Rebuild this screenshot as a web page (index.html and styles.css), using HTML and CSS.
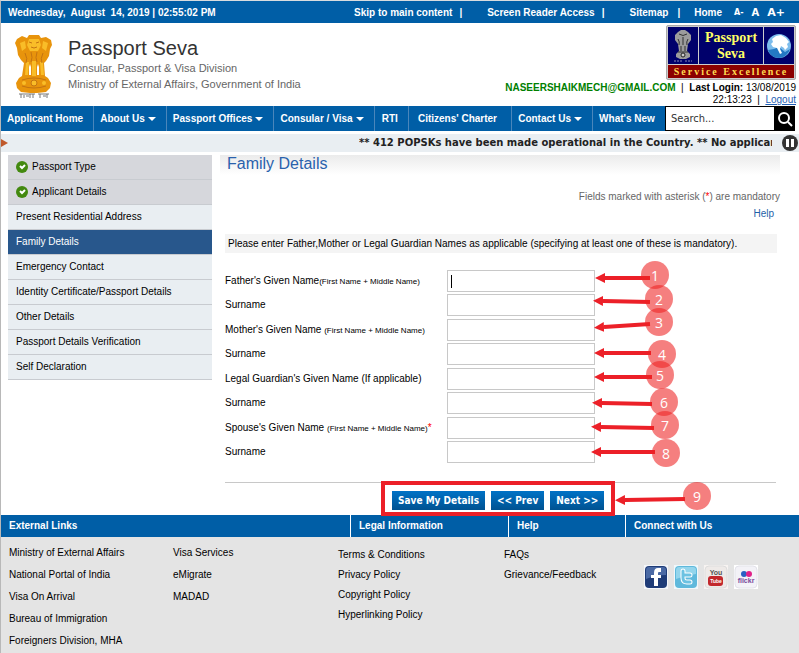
FILE: index.html
```
<!DOCTYPE html>
<html lang="en">
<head>
    <meta charset="UTF-8">
    <meta name="viewport" content="width=device-width, initial-scale=1.0">
    <title>Passport Seva - Family Details</title>
    <link rel="stylesheet" href="styles.css">
</head>
<body>
    <!-- Top Bar -->
    <div class="top-bar">
        <span class="clock">Wednesday,&nbsp; August&nbsp; 14, 2019 | 02:55:02 PM</span>
        <div class="top-links">
            <a href="#main">Skip to main content</a><span class="bar wide">|</span>
            <a href="#">Screen Reader Access</a><span class="bar wide">|</span>
            <a href="#">Sitemap</a><span class="bar">|</span>
            <a href="#">Home</a>
            <button type="button" class="font-btn small">A-</button>
            <button type="button" class="font-btn">A</button>
            <button type="button" class="font-btn large">A+</button>
        </div>
    </div>

    <!-- Header -->
    <header class="header">
        <svg class="emblem" width="42" height="66" viewBox="0 0 42 66">
            <path fill="#e8940c" d="M14 4l2-3h10l2 3 5-1 5 3 1 5-2 4-1 7-3 5-2 2 1 13 3 2 3 5-1 5-4 4-9 1H17l-9-1-4-4-1-5 3-5 3-2 2-13-3-3-3-5-1-7-2-5 2-4 5-3z"/>
            <path fill="#f9bd28" d="M16 5h10l2 6-3 6h-8l-3-6zM7 9l5-2 1 7-4 3zM35 9l-5-2-1 7 4 3zM13 28h3l-1 13h-3zM19 27h4v15h-4zM27 28h3l1 13h-3z"/>
            <path fill="none" stroke="#c47412" d="M16 8l3 1m4 0l3-1M18 13q3 2 6 0M12 19q3 6 1 10M18 18q2 6 0 10M24 18q-2 6 0 10M30 19q-3 6-1 10M9 46q12-4 24 0M9 52q12 4 24 0"/>
            <path fill="#fff" d="M16 33l1-3 1 3v8h-2zM24 33l1-3 1 3v8h-2z"/>
            <circle cx="21" cy="49" r="3" fill="#f9bd28" stroke="#c47412"/>
            <circle cx="11" cy="49" r="2" fill="#f9bd28"/>
            <circle cx="31" cy="49" r="2" fill="#f9bd28"/>
            <path fill="none" stroke="#777" d="M6 60h16M25 60h11M8 60v4M11 61v3M13 62h3M17 60v4M20 60v4M27 60v4M30 62h3M34 60v4"/>
        </svg>
        <div class="brand">
            <div class="brand-name">Passport Seva</div>
            <div class="brand-line">Consular, Passport &amp; Visa Division</div>
            <div class="brand-line">Ministry of External Affairs, Government of India</div>
        </div>
        <div class="account">
            <div class="seva-logo">
                <div class="seva-top">
                    <div class="seva-cell">
                        <svg width="22" height="34" viewBox="0 0 22 34">
                            <path fill="#9c9c9c" d="M6 3l3-2h4l3 2 3 3v5l-3 4-1 7 3 3v3l-4 2H8l-4-2v-3l3-3-1-7-3-4V6z"/>
                            <path fill="none" stroke="#333" d="M7 5q4 3 8 0M6 10q2 3 1 6M11 8v8M16 10q-2 3-1 6M9 17v5M13 17v5M6 23h10"/>
                            <circle cx="11" cy="26" r="2" fill="#ccc" stroke="#222"/>
                            <path stroke="#88b" d="M2 32h9M13 32h7" stroke-dasharray="2 1"/>
                        </svg>
                    </div>
                    <div class="seva-name">Passport<br>Seva</div>
                    <div class="seva-cell">
                        <svg width="26" height="32" viewBox="0 0 26 32">
                            <circle cx="13" cy="16" r="12" fill="#7cbcec"/>
                            <path fill="#2479c4" d="M13 28A12 12 0 0 1 2 20l6-1 5-2 6 5 5-3a12 12 0 0 1-11 9z"/>
                            <path fill="#fff" d="M6 9l4-3 5-1 5 3 3 4-2 2 1 3-3 3-1-2-3-2-1 3 2 4-2 1-3-6-4-1-2-3 2-2z"/>
                        </svg>
                    </div>
                </div>
                <div class="seva-motto">Service Excellence</div>
            </div>
            <div class="login-info">
                <b class="email">NASEERSHAIKMECH@GMAIL.COM</b>&nbsp; |&nbsp; <b>Last Login:</b> 13/08/2019<br>
                22:13:23&nbsp; |&nbsp; <a href="#">Logout</a>
            </div>
        </div>
    </header>

    <!-- Navigation -->
    <nav class="nav">
        <ul class="nav-list">
            <li><a href="#">Applicant Home</a></li>
            <li><a href="#" class="has-menu">About Us</a></li>
            <li><a href="#" class="has-menu">Passport Offices</a></li>
            <li><a href="#" class="has-menu">Consular / Visa</a></li>
            <li class="tight"><a href="#">RTI</a></li>
            <li class="roomy"><a href="#">Citizens' Charter</a></li>
            <li><a href="#" class="has-menu">Contact Us</a></li>
            <li><a href="#">What's New</a></li>
        </ul>
        <form class="search">
            <input type="text" placeholder="Search..." aria-label="Search">
            <button type="button" aria-label="Search">
                <svg width="16" height="16" viewBox="0 0 16 16"><circle cx="7" cy="7" r="5" fill="none" stroke="#fff" stroke-width="2"/><path d="M11 11l4 4" stroke="#fff" stroke-width="2"/></svg>
            </button>
        </form>
    </nav>

    <!-- News Ticker -->
    <div class="ticker">
        <svg class="ticker-arrow" width="8" height="10" viewBox="0 0 8 10"><path fill="#c0592b" d="M0 1l7 4-7 4z"/></svg>
        <div class="ticker-text">** 412 POPSKs have been made operational in the Country. ** No applicant</div>
        <button type="button" class="pause" aria-label="Pause">
            <svg width="16" height="16" viewBox="0 0 16 16"><circle cx="8" cy="8" r="8" fill="#333"/><path fill="#fff" d="M4 4h3v8H4zM9 4h3v8H9z"/></svg>
        </button>
    </div>

    <div class="page">
        <!-- Steps -->
        <ul class="steps">
            <li class="done"><a href="#"><svg width="12" height="12" viewBox="0 0 12 12"><circle cx="6" cy="6" r="6" fill="#43890f"/><path d="M4 5l2 2 3-3" fill="none" stroke="#fff" stroke-width="2"/></svg>Passport Type</a></li>
            <li class="done"><a href="#"><svg width="12" height="12" viewBox="0 0 12 12"><circle cx="6" cy="6" r="6" fill="#43890f"/><path d="M4 5l2 2 3-3" fill="none" stroke="#fff" stroke-width="2"/></svg>Applicant Details</a></li>
            <li><a href="#">Present Residential Address</a></li>
            <li class="current"><a href="#">Family Details</a></li>
            <li><a href="#">Emergency Contact</a></li>
            <li><a href="#">Identity Certificate/Passport Details</a></li>
            <li><a href="#">Other Details</a></li>
            <li><a href="#">Passport Details Verification</a></li>
            <li><a href="#">Self Declaration</a></li>
        </ul>

        <!-- Family Details Form -->
        <main class="content" id="main">
            <h1>Family Details</h1>
            <p class="note">Fields marked with asterisk (<span class="req">*</span>) are mandatory</p>
            <p class="help"><a href="#">Help</a></p>
            <p class="instruction">Please enter Father,Mother or Legal Guardian Names as applicable (specifying at least one of these is mandatory).</p>

            <form class="family-form">
                <div class="row"><label for="father">Father's Given Name<small>(First Name + Middle Name)</small></label><input type="text" id="father" class="active"></div>
                <div class="row"><label for="fatherSurname">Surname</label><input type="text" id="fatherSurname"></div>
                <div class="row"><label for="mother">Mother's Given Name <small>(First Name + Middle Name)</small></label><input type="text" id="mother"></div>
                <div class="row"><label for="motherSurname">Surname</label><input type="text" id="motherSurname"></div>
                <div class="row"><label for="guardian">Legal Guardian's Given Name (If applicable)</label><input type="text" id="guardian"></div>
                <div class="row"><label for="guardianSurname">Surname</label><input type="text" id="guardianSurname"></div>
                <div class="row"><label for="spouse">Spouse's Given Name <small>(First Name + Middle Name)</small><span class="req">*</span></label><input type="text" id="spouse"></div>
                <div class="row"><label for="spouseSurname">Surname</label><input type="text" id="spouseSurname"></div>
                <div class="actions">
                    <button type="button">Save My Details</button>
                    <button type="button">&lt;&lt; Prev</button>
                    <button type="button">Next &gt;&gt;</button>
                </div>
            </form>

            <!-- Numbered callouts -->
            <svg class="callouts" width="500" height="370">
                <defs>
                    <marker id="head" markerUnits="userSpaceOnUse" markerWidth="12" markerHeight="12" refX="0" refY="6" orient="auto">
                        <path d="M0 1v10l10-5z" fill="#ec2028"/>
                    </marker>
                </defs>
                <rect x="163" y="328" width="230" height="31" fill="none" stroke="#ec2028" stroke-width="4"/>
                <g class="arrows">
                    <path d="M430 123H385"/>
                    <path d="M430 147L383 146"/>
                    <path d="M430 169L384 172"/>
                    <path d="M431 198H384"/>
                    <path d="M432 222H384"/>
                    <path d="M432 249L382 248"/>
                    <path d="M434 273L381 272"/>
                    <path d="M435 297H381"/>
                    <path d="M465 344L405 345"/>
                </g>
                <g class="dots">
                    <circle cx="435" cy="120" r="14"/>
                    <circle cx="439" cy="144" r="14"/>
                    <circle cx="439" cy="167" r="14"/>
                    <circle cx="442" cy="199" r="14"/>
                    <circle cx="440" cy="220" r="14"/>
                    <circle cx="444" cy="247" r="14"/>
                    <circle cx="445" cy="270" r="14"/>
                    <circle cx="446" cy="298" r="14"/>
                    <circle cx="477" cy="341" r="14"/>
                </g>
                <g class="numbers">
                    <text x="435" y="126">1</text>
                    <text x="439" y="150">2</text>
                    <text x="439" y="173">3</text>
                    <text x="442" y="205">4</text>
                    <text x="440" y="226">5</text>
                    <text x="444" y="253">6</text>
                    <text x="445" y="276">7</text>
                    <text x="446" y="304">8</text>
                    <text x="477" y="347">9</text>
                </g>
            </svg>
        </main>
    </div>

    <!-- Footer -->
    <footer class="footer">
        <div class="footer-head">
            <h2>External Links</h2>
            <h2>Legal Information</h2>
            <h2>Help</h2>
            <h2>Connect with Us</h2>
        </div>
        <div class="footer-body">
            <ul class="external">
                <li><a href="#">Ministry of External Affairs</a></li>
                <li><a href="#">National Portal of India</a></li>
                <li><a href="#">Visa On Arrival</a></li>
                <li><a href="#">Bureau of Immigration</a></li>
                <li><a href="#">Foreigners Division, MHA</a></li>
            </ul>
            <ul class="external">
                <li><a href="#">Visa Services</a></li>
                <li><a href="#">eMigrate</a></li>
                <li><a href="#">MADAD</a></li>
            </ul>
            <ul class="legal">
                <li><a href="#">Terms &amp; Conditions</a></li>
                <li><a href="#">Privacy Policy</a></li>
                <li><a href="#">Copyright Policy</a></li>
                <li><a href="#">Hyperlinking Policy</a></li>
            </ul>
            <ul class="legal">
                <li><a href="#">FAQs</a></li>
                <li><a href="#">Grievance/Feedback</a></li>
            </ul>
            <div class="social">
                <a href="#" aria-label="Facebook">
                    <svg width="24" height="24" viewBox="0 0 24 24">
                        <rect width="24" height="24" fill="#f4f6fa"/>
                        <rect x="1" y="1" width="22" height="22" rx="4" fill="#1f3c78"/>
                        <path fill="#4a69a4" d="M2 5q0-3 3-3h14q3 0 3 3v5q-10 0-20 4z"/>
                        <path fill="#fff" d="M10 21v-8H7v-3h3V8q0-5 4-5h3v4h-2q-1 0-1 1v2h3v3h-3v8z"/>
                    </svg>
                </a>
                <a href="#" aria-label="Twitter">
                    <svg width="24" height="24" viewBox="0 0 24 24">
                        <rect width="24" height="24" fill="#f0f8fb"/>
                        <rect x="1" y="1" width="22" height="22" rx="4" fill="#5fb9dc"/>
                        <path fill="#93d5ec" d="M2 5q0-3 3-3h14q3 0 3 3v4q-10 1-20 5z"/>
                        <path fill="none" stroke="#fff" stroke-width="5" stroke-linecap="round" stroke-linejoin="round" d="M9 6v7q0 4 4 4h3M9 10h7"/>
                        <path fill="none" stroke="#6cc2e2" stroke-width="3" stroke-linecap="round" stroke-linejoin="round" d="M9 6v7q0 4 4 4h3M9 10h7"/>
                    </svg>
                </a>
                <a href="#" aria-label="YouTube">
                    <svg width="24" height="24" viewBox="0 0 24 24">
                        <rect width="24" height="24" fill="#f7f3f1"/>
                        <rect x="1" y="1" width="22" height="22" rx="4" fill="#eeeae8" stroke="#ddd"/>
                        <rect x="4" y="11" width="15" height="10" rx="3" fill="#c2282c"/>
                        <text class="yt-you" x="12" y="10">You</text>
                        <text class="yt-tube" x="12" y="18">Tube</text>
                    </svg>
                </a>
                <a href="#" aria-label="Flickr">
                    <svg width="24" height="24" viewBox="0 0 24 24">
                        <rect width="24" height="24" fill="#fff"/>
                        <rect x="1" y="1" width="22" height="22" rx="4" fill="#f3f2f7" stroke="#e3e3ea"/>
                        <circle cx="10" cy="9" r="3" fill="#2b60c4"/>
                        <circle cx="15" cy="9" r="3" fill="#e0218a"/>
                        <text class="flickr" x="12" y="18">flickr</text>
                    </svg>
                </a>
            </div>
        </div>
    </footer>
</body>
</html>
```
FILE: styles.css
```
* {
    box-sizing: border-box;
}

body {
    margin: 0;
    min-height: 100vh;
    display: flex;
    flex-direction: column;
    border-top: 1px solid #d8dcdf;
    border-left: 1px solid #b8b8b8;
    background: #fff;
    color: #000;
    font-family: "Liberation Sans", Arial, sans-serif;
    font-size: 10px;
}

a {
    color: inherit;
    text-decoration: none;
}

ul {
    list-style: none;
    margin: 0;
    padding: 0;
}

button {
    border: none;
    padding: 0;
    cursor: pointer;
}

/* Top Bar */
.top-bar {
    display: flex;
    align-items: center;
    justify-content: space-between;
    height: 22px;
    padding: 0 14px 0 7px;
    background: #005ea6;
    color: #fff;
    font-weight: bold;
}

.top-links {
    display: flex;
    align-items: center;
}

.bar {
    margin: 0 14px 0 9px;
}

.bar.wide {
    margin: 0 25px 0 7px;
}

.font-btn {
    margin-left: 8px;
    background: none;
    color: #fff;
    font-family: "DejaVu Sans", Verdana, sans-serif;
    font-weight: bold;
    font-size: 10px;
}

.font-btn.small {
    margin-left: 12px;
    font-size: 8px;
}

.font-btn.large {
    font-size: 11px;
}

/* Header */
.header {
    display: flex;
    height: 83px;
    padding: 0 3px 0 12px;
}

.emblem {
    margin-top: 11px;
}

.brand {
    flex: 1;
    margin: 13px 0 0 13px;
    color: #666;
}

.brand-name {
    color: #333;
    font-size: 20px;
    line-height: 24px;
}

.brand-line {
    font-size: 11px;
    line-height: 16px;
}

.account {
    display: flex;
    flex-direction: column;
    align-items: flex-end;
}

.seva-logo {
    width: 130px;
    margin-top: 2px;
    padding: 1px;
    border: 1px solid #aaa;
    border-radius: 2px;
    background: #ccc;
}

.seva-top {
    display: grid;
    grid-template-columns: 30px 1fr 30px;
    height: 37px;
    background: #00006b;
}

.seva-cell {
    display: flex;
    align-items: center;
    justify-content: center;
}

.seva-name {
    border: 1px solid #ccc;
    border-width: 0 1px;
    color: #ffff66;
    font: bold 14px/16px "Liberation Serif", "Times New Roman", serif;
    text-align: center;
    padding-top: 3px;
}

.seva-motto {
    height: 14px;
    border-top: 1px solid #ccc;
    background: #8b0000;
    color: #ffdc50;
    font: bold 10px/13px "Liberation Serif", "Times New Roman", serif;
    letter-spacing: 2px;
    text-align: center;
}

.login-info {
    margin-top: 2px;
    line-height: 12px;
    text-align: right;
}

.email {
    color: #008000;
}

.login-info a {
    color: #1f5fb5;
    text-decoration: underline;
}

/* Navigation */
.nav {
    display: flex;
    height: 25px;
    padding-right: 4px;
}

.nav-list {
    flex: 1;
    display: flex;
    background: #005ea6;
    color: #fff;
    font-weight: bold;
    line-height: 25px;
    white-space: nowrap;
}

.nav-list li {
    flex: 1 1 auto;
    padding: 0 5px 0 6px;
    border-right: 1px solid #4a86bb;
}

.nav-list li:last-child {
    border-right: none;
}

.nav-list .tight {
    padding: 0 5px 0 7px;
}

.nav-list .roomy {
    padding: 0 9px;
}

.has-menu::after {
    content: "";
    display: inline-block;
    margin-left: 3px;
    vertical-align: 1px;
    border: 4px solid transparent;
    border-top-color: #fff;
    border-bottom: none;
}

.search {
    display: flex;
    width: 130px;
}

.search input {
    flex: 1;
    min-width: 0;
    border: 1px solid #000;
    padding: 0 5px;
    background: #fff;
    font: 11px "DejaVu Sans Condensed", Tahoma, sans-serif;
}

.search input::placeholder {
    color: #333;
}

.search button {
    display: flex;
    align-items: center;
    justify-content: center;
    width: 20px;
    background: #000;
}

/* News Ticker */
.ticker {
    display: flex;
    align-items: center;
    height: 18px;
    margin-top: 3px;
    background: #e9eef2;
}

.ticker-text {
    flex: 1;
    min-width: 0;
    margin: 0 10px 0 350px;
    overflow: hidden;
    white-space: nowrap;
    color: #222;
    font: bold 10px/18px "DejaVu Sans", Verdana, sans-serif;
}

.pause {
    display: flex;
    width: 17px;
    background: none;
}

/* Page */
.page {
    display: flex;
    gap: 8px;
    margin: 3px 19px 0 7px;
}

/* Steps */
.steps {
    width: 204px;
}

.steps li {
    height: 25px;
    border-bottom: 1px solid #c8cbd0;
    background: #e9eef2;
    line-height: 24px;
}

.steps a {
    display: flex;
    align-items: center;
    gap: 4px;
    padding-left: 8px;
}

.steps .done {
    background: #d6d7dc;
}

.steps .current {
    background: #28578c;
    color: #fff;
}

/* Content */
.content {
    position: relative;
    flex: 1;
    min-width: 0;
}

h1 {
    margin: 0;
    padding-left: 7px;
    height: 20px;
    background: linear-gradient(#ebebeb, #fff);
    color: #2a62ad;
    font-size: 16px;
    font-weight: normal;
    line-height: 17px;
}

.note,
.help {
    margin: 0;
    color: #666;
    line-height: 17px;
    text-align: right;
}

.note {
    margin-top: 13px;
}

.help {
    padding-right: 6px;
    color: #1f5fa8;
}

.req {
    color: #f00;
}

.instruction {
    margin: 12px 3px 17px 5px;
    padding-left: 3px;
    background: #f4f4f4;
    line-height: 19px;
}

.family-form {
    margin: 0 4px 0 5px;
}

.row {
    display: flex;
    height: 24px;
}

.row:nth-child(even) {
    height: 25px;
}

.row label {
    width: 222px;
    line-height: 22px;
}

.row small {
    font-size: 8px;
}

.row input {
    width: 148px;
    height: 22px;
    border: 1px solid #c8c8c8;
    padding: 0 4px;
    outline: none;
    font: inherit;
}

.row .active {
    background: linear-gradient(#000, #000) 3px center / 1px 13px no-repeat;
}

.actions {
    display: flex;
    gap: 6px;
    margin-top: 16px;
    padding: 8px 0 5px 167px;
    border-top: 1px solid #c8c8c8;
}

.actions button {
    height: 19px;
    padding: 0 6px;
    background: linear-gradient(#0072c6, #005291);
    color: #fff;
    font: bold 10px "DejaVu Sans Condensed", Tahoma, sans-serif;
    white-space: nowrap;
}

/* Callouts */
.callouts {
    position: absolute;
    top: 0;
    left: 0;
    pointer-events: none;
}

.arrows path {
    stroke: #ec2028;
    stroke-width: 4px;
    marker-end: url(#head);
}

.dots {
    fill: #ee2222;
    fill-opacity: 0.58;
}

.numbers {
    fill: #fff;
    font-family: "Open Sans", sans-serif;
    font-size: 14px;
    text-anchor: middle;
}

/* Footer */
.footer {
    flex: 1;
    background: #e4e4e4;
}

.footer-head {
    display: grid;
    grid-template-columns: 349fr 157fr 116fr 173fr;
    gap: 1px;
    background: #fff;
}

.footer-head h2 {
    margin: 0;
    padding-left: 8px;
    background: #005ea6;
    color: #fff;
    font-size: 10px;
    line-height: 22px;
}

.footer-body {
    display: grid;
    grid-template-columns: 164fr 165fr 166fr 140fr 155fr;
    padding-left: 8px;
}

.external {
    padding-top: 5px;
    line-height: 22px;
}

.legal {
    padding-top: 8px;
    line-height: 20px;
}

.social {
    display: flex;
    gap: 6px;
    padding-top: 28px;
}

.yt-you,
.yt-tube,
.flickr {
    font-family: "Liberation Sans", Arial, sans-serif;
    font-weight: bold;
    font-size: 7px;
    text-anchor: middle;
}

.yt-you {
    fill: #555;
}

.yt-tube {
    fill: #fff;
    font-size: 5px;
}

.flickr {
    fill: #7a4a9c;
}
```
